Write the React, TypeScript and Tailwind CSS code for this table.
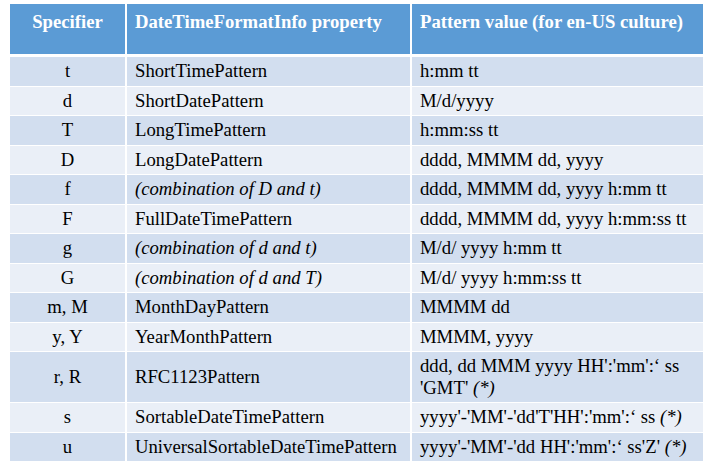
import React from "react"

type Row = {
  spec: string
  prop: React.ReactNode
  value: React.ReactNode
  tall?: boolean
}

const star = <i>(*)</i>

const rows: Row[] = [
  { spec: "t", prop: "ShortTimePattern", value: "h:mm tt" },
  { spec: "d", prop: "ShortDatePattern", value: "M/d/yyyy" },
  { spec: "T", prop: "LongTimePattern", value: "h:mm:ss tt" },
  { spec: "D", prop: "LongDatePattern", value: "dddd, MMMM dd, yyyy" },
  { spec: "f", prop: <i>(combination of D and t)</i>, value: "dddd, MMMM dd, yyyy h:mm tt" },
  { spec: "F", prop: "FullDateTimePattern", value: "dddd, MMMM dd, yyyy h:mm:ss tt" },
  { spec: "g", prop: <i>(combination of d and t)</i>, value: "M/d/ yyyy h:mm tt" },
  { spec: "G", prop: <i>(combination of d and T)</i>, value: "M/d/ yyyy h:mm:ss tt" },
  { spec: "m, M", prop: "MonthDayPattern", value: "MMMM dd" },
  { spec: "y, Y", prop: "YearMonthPattern", value: "MMMM, yyyy" },
  {
    spec: "r, R",
    prop: "RFC1123Pattern",
    value: (
      <>
        ddd, dd MMM yyyy HH':'mm':‘ ss
        <br />
        'GMT' {star}
      </>
    ),
    tall: true,
  },
  { spec: "s", prop: "SortableDateTimePattern", value: <>yyyy'-'MM'-'dd'T'HH':'mm':‘ ss {star}</> },
  { spec: "u", prop: "UniversalSortableDateTimePattern", value: <>yyyy'-'MM'-'dd HH':'mm':‘ ss'Z' {star}</> },
]

const head = "h-[50px] mb-[2px] bg-[#5b9bd5] text-white font-bold pt-[7px] px-2"

export default function App() {
  return (
    <div
      className="w-[726px] h-[468px] bg-white pt-[4px] pl-[10px] text-[18.7px] leading-[22px] text-black"
      style={{ fontFamily: '"Liberation Serif", "Times New Roman", serif' }}
    >
      <div className="grid w-[693px] grid-cols-[115px_283px_291px] gap-x-[2px] gap-y-px">
        <div className={`${head} text-center`}>Specifier</div>
        <div className={head}>DateTimeFormatInfo property</div>
        <div className={head}>Pattern value (for en-US culture)</div>
        {rows.map((r, i) => {
          const bg = i % 2 === 0 ? "bg-[#d2deef]" : "bg-[#eaeff7]"
          const h = r.tall ? "h-[50px]" : "h-[28.5px]"
          return (
            <React.Fragment key={r.spec}>
              <div className={`${bg} ${h} flex items-center justify-center px-2`}>{r.spec}</div>
              <div className={`${bg} ${h} flex items-center px-2 whitespace-nowrap`}>{r.prop}</div>
              <div className={`${bg} ${h} flex items-center px-2 whitespace-nowrap`}>
                <span>{r.value}</span>
              </div>
            </React.Fragment>
          )
        })}
      </div>
    </div>
  )
}
